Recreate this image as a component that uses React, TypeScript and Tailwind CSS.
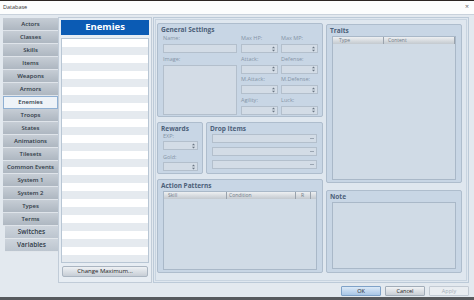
const tabs = [
  "Actors",
  "Classes",
  "Skills",
  "Items",
  "Weapons",
  "Armors",
  "Enemies",
  "Troops",
  "States",
  "Animations",
  "Tilesets",
  "Common Events",
  "System 1",
  "System 2",
  "Types",
  "Terms",
];

const font = { fontFamily: '"Open Sans", "DejaVu Sans", sans-serif' };

function Spin({ w = "w-[37px]" }: { w?: string }) {
  return (
    <div className={`${w} h-[9px] bg-[#d3dce6] border border-[#b3bfcc] flex items-center justify-end pr-[2px]`}>
      <svg width="3" height="6" viewBox="0 0 3 6">
        <path d="M0 2.2 L1.5 0.6 L3 2.2 Z" fill="#6a7684" />
        <path d="M0 3.8 L1.5 5.4 L3 3.8 Z" fill="#6a7684" />
      </svg>
    </div>
  );
}

function Label({ children }: { children: string }) {
  return <div className="text-[5.5px] leading-[7px] text-[#8594a6]">{children}</div>;
}

function Group({
  title,
  className,
  children,
}: {
  title: string;
  className?: string;
  children?: React.ReactNode;
}) {
  return (
    <div className={`bg-[#c8d6e5] border border-[#aebdcd] rounded-[2px] px-[5px] pt-[2px] ${className ?? ""}`}>
      <div className="-ml-[2px] text-[6.5px] leading-[8px] font-bold text-[#4c6079]">{title}</div>
      {children}
    </div>
  );
}

function Drop() {
  return (
    <div className="h-[9px] bg-[#d3dce6] border border-[#b3bfcc] flex items-center justify-end pr-[2px] text-[6px] text-[#8a96a4] leading-none">
      <div className="w-[4px] h-[1px] bg-[#9aa5b2]" />
    </div>
  );
}

export default function App() {
  return (
    <div className="w-[474px] h-[300px] overflow-hidden bg-[#e3e9ef] flex flex-col" style={font}>
      <div className="h-[1px] bg-[#2b2522]" />
      <div className="h-[14px] bg-[#fcfdfd] flex items-center justify-between px-[3px] border-b border-[#c9d2dc]">
        <span className="text-[5.5px] text-[#333]">Database</span>
        <span className="text-[7px] text-[#666] pr-[2px]">×</span>
      </div>

      <div className="flex-1 flex flex-col">
        <div className="flex h-[266px] mt-[2px]">
          {/* tabs */}
          <div className="w-[55px] ml-[3px] flex flex-col pt-[1px]">
            {tabs.map((t) =>
              t === "Enemies" ? (
                <div
                  key={t}
                  className="h-[13px] flex items-center justify-center bg-[#eef3f8] border border-[#8fb0d3] text-[6px] font-semibold text-[#2c3948]"
                >
                  {t}
                </div>
              ) : (
                <div
                  key={t}
                  className="h-[13px] flex items-center justify-center bg-gradient-to-b from-[#c6cdd5] to-[#aeb7c1] border-b border-[#dfe4ea] text-[6px] font-semibold text-[#2f3a46]"
                >
                  {t}
                </div>
              )
            )}
            {["Switches", "Variables"].map((t) => (
              <div
                key={t}
                className="h-[13px] ml-[2px] flex items-center justify-center bg-gradient-to-b from-[#cdd4dc] to-[#bcc5cf] border-b border-[#e1e6eb] text-[6.5px] font-semibold text-[#2f3a46]"
              >
                {t}
              </div>
            ))}
          </div>

          {/* list */}
          <div className="w-[94px] border border-[#c1ccd8] bg-[#e7edf3] flex flex-col px-[1px] pt-[2px]">
            <div className="h-[15px] mx-[1px] bg-[#0b5bb4] flex items-center justify-center text-[9.5px] font-bold text-white">
              Enemies
            </div>
            <div className="mt-[3px] mx-[1px] h-[225px] border border-[#b8c6d4] bg-white overflow-hidden">
              {Array.from({ length: 28 }).map((_, i) => (
                <div key={i} className={`h-[8px] ${i % 2 === 0 ? "bg-white" : "bg-[#e5eaef]"}`} />
              ))}
            </div>
            <div className="mt-[3px] mx-[2px] h-[11px] bg-gradient-to-b from-[#eef1f4] to-[#c7ced6] border border-[#aab5c1] rounded-[2px] flex items-center justify-center text-[6px] text-[#222]">
              Change Maximum...
            </div>
          </div>

          {/* main */}
          <div className="w-[316px] border border-[#bccad8] bg-[#dfe7ef] ml-[1px] p-[1px]">
            <div className="h-full border border-[#c8d4e0] flex gap-[3px] pl-[1px] pr-[4px] pt-[3px] pb-[7px]">
              <div className="w-[166px] flex flex-col gap-[5px]">
                <Group title="General Settings" className="h-[94px]">
                  <div className="flex gap-[4px] mt-[1px]">
                    <div className="w-[76px] flex flex-col">
                      <Label>Name:</Label>
                      <div className="h-[9px] mt-[2px] bg-[#d3dce6] border border-[#b3bfcc]" />
                      <div className="mt-[3px]">
                        <Label>Image:</Label>
                      </div>
                      <div className="h-[50px] mt-[2px] bg-[#d3dce6] border border-[#b3bfcc]" />
                    </div>
                    <div className="grid grid-cols-2 gap-x-[4px] gap-y-[2px]">
                      {[
                        ["Max HP:", "Max MP:"],
                        ["Attack:", "Defense:"],
                        ["M.Attack:", "M.Defense:"],
                        ["Agility:", "Luck:"],
                      ].map((row) =>
                        row.map((l) => (
                          <div key={l} className="flex flex-col gap-[2px]">
                            <Label>{l}</Label>
                            <Spin />
                          </div>
                        ))
                      )}
                    </div>
                  </div>
                </Group>

                <div className="flex gap-[3px] h-[52px]">
                  <Group title="Rewards" className="w-[46px]">
                    <Label>EXP:</Label>
                    <div className="mt-[1px]">
                      <Spin w="w-[35px]" />
                    </div>
                    <div className="mt-[4px]">
                      <Label>Gold:</Label>
                    </div>
                    <div className="mt-[1px]">
                      <Spin w="w-[35px]" />
                    </div>
                  </Group>
                  <Group title="Drop Items" className="flex-1">
                    <div className="flex flex-col gap-[4px] mt-[1px]">
                      <Drop />
                      <Drop />
                      <Drop />
                    </div>
                  </Group>
                </div>

                <Group title="Action Patterns" className="flex-1 flex flex-col pb-[2px]">
                  <div className="flex-1 mt-[1px] bg-[#d0dbe6] border border-[#a9b8c8] flex flex-col">
                    <div className="h-[7px] flex bg-gradient-to-b from-[#eef0f2] to-[#c3c9cf] text-[5px] leading-[7px] text-[#6f7b88]">
                      <div className="w-[63px] pl-[4px] border-r border-[#9aa3ad]">Skill</div>
                      <div className="w-[69px] pl-[2px] border-r border-[#9aa3ad]">Condition</div>
                      <div className="w-[15px] pl-[5px] border-r border-[#9aa3ad]">R</div>
                      <div className="flex-1" />
                    </div>
                  </div>
                </Group>
              </div>

              <div className="flex-1 flex flex-col gap-[7px] pt-[1px]">
                <Group title="Traits" className="h-[159px] flex flex-col pb-[2px]">
                  <div className="flex-1 mt-[1px] bg-[#d0dbe6] border border-[#a9b8c8] flex flex-col">
                    <div className="h-[7px] flex bg-gradient-to-b from-[#eef0f2] to-[#c3c9cf] text-[5px] leading-[7px] text-[#6f7b88]">
                      <div className="w-[51px] pl-[6px] border-r border-[#9aa3ad]">Type</div>
                      <div className="w-[71px] pl-[4px] border-r border-[#9aa3ad]">Content</div>
                      <div className="flex-1" />
                    </div>
                  </div>
                </Group>
                <Group title="Note" className="flex-1 flex flex-col pb-[3px]">
                  <div className="flex-1 mt-[1px] bg-[#d0dbe6] border border-[#a9b8c8]" />
                </Group>
              </div>
            </div>
          </div>
        </div>

        <div className="flex justify-end gap-[4px] pr-[5px] mt-[3px]">
          <div className="w-[40px] h-[10px] bg-gradient-to-b from-[#dbe9f7] to-[#a9c6e6] border border-[#7fa2c8] rounded-[1px] flex items-center justify-center text-[5.5px] text-[#222]">
            OK
          </div>
          <div className="w-[40px] h-[10px] bg-gradient-to-b from-[#f1f3f5] to-[#c8ced5] border border-[#a2adb9] rounded-[1px] flex items-center justify-center text-[5.5px] text-[#222]">
            Cancel
          </div>
          <div className="w-[40px] h-[10px] bg-[#e9edf1] border border-[#c3cbd4] rounded-[1px] flex items-center justify-center text-[5.5px] text-[#a4adb7]">
            Apply
          </div>
        </div>
      </div>
      <div className="h-[3px] bg-[#575a5e]" />
    </div>
  );
}
